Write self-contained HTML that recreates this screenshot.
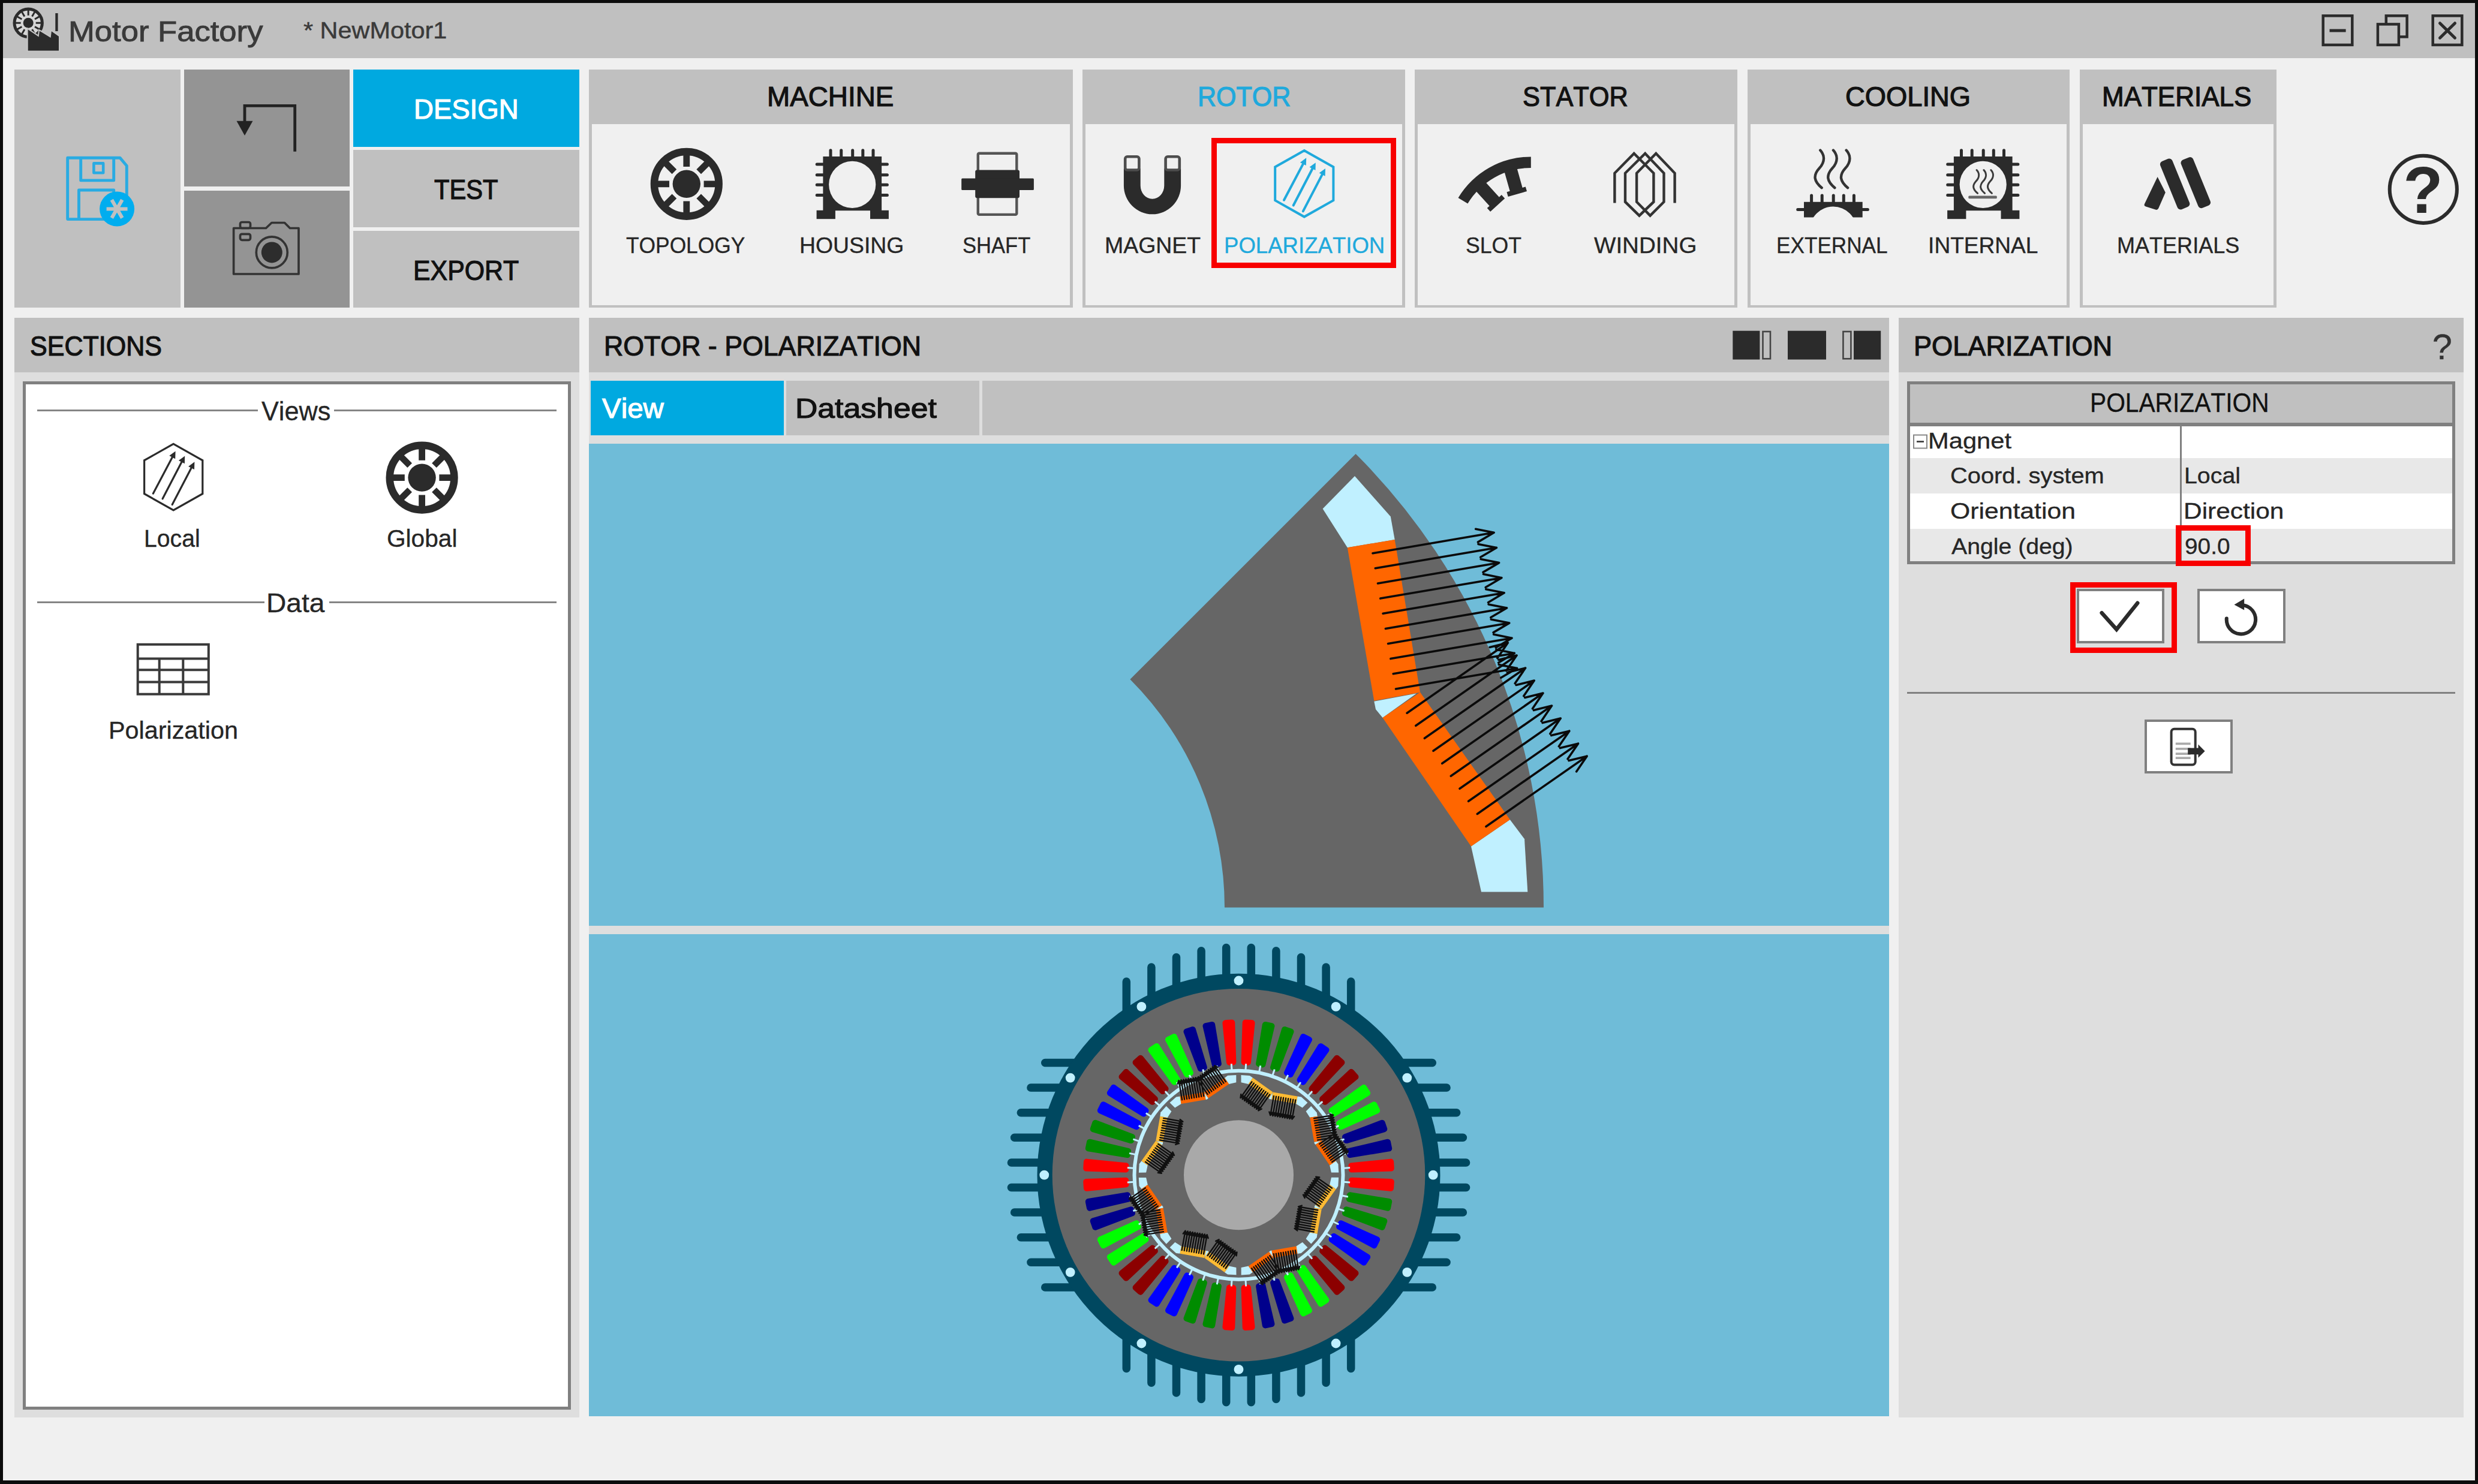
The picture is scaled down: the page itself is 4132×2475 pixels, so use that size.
<!DOCTYPE html>
<html lang="en"><head><meta charset="utf-8"><title>Motor Factory - NewMotor1</title>
<style>
html,body{margin:0;padding:0;background:#0c0c0c}
body{width:4132px;height:2475px;background:#0c0c0c;position:relative;overflow:hidden;font-family:"Liberation Sans",sans-serif}
header,nav,aside,main{display:block;position:static;margin:0;padding:0}
.b{position:absolute}
.t{position:absolute;white-space:nowrap;transform-origin:0 0;font-kerning:none;font-variant-ligatures:none}
svg{position:absolute;left:0;top:0;overflow:visible}
</style></head><body>
<div class="b win" style="left:5px;top:5px;width:4121.5px;height:2463.5px;background:#f0f0f0;"></div>
<header id="titlebar">
<div class="b titlebar" style="left:5px;top:5px;width:4121.5px;height:91.7px;background:#c0c0c0;"></div>
<svg class="icons icons-titlebar" width="4132" height="2475" viewBox="0 0 4132 2475">
<g class="appicon">
<circle cx="47.2" cy="38.3" r="23" fill="#d6d6d6"/>
<circle cx="47.2" cy="38.3" r="23.20" fill="none" stroke="#2b2b2b" stroke-width="5.00"/><circle cx="47.2" cy="38.3" r="8.50" fill="#2b2b2b"/><path d="M59.7 38.3L68.9 38.3M58.0 44.5L66.0 49.1M53.5 49.1L58.1 57.1M47.2 50.8L47.2 60.0M41.0 49.1L36.4 57.1M36.4 44.5L28.4 49.1M34.7 38.3L25.5 38.3M36.4 32.0L28.4 27.5M40.9 27.5L36.3 19.5M47.2 25.8L47.2 16.6M53.5 27.5L58.1 19.5M58.0 32.0L66.0 27.4" stroke="#2b2b2b" stroke-width="3.00" fill="none"/>
<polygon points="45.7,85.5 45.7,47.4 63.9,59.7 65.1,50 83.8,61.3 85.1,50.4 99,60.1 99,85.5" fill="#2b2b2b" stroke="#c6c6c6" stroke-width="2"/>
<rect x="92.3" y="22" width="4.3" height="30" fill="#2b2b2b"/>
</g>
<g class="winbtn" fill="none" stroke="#2b2b2b" stroke-width="4.5">
<rect x="3873.7" y="26.3" width="48.6" height="48.6"/>
<path d="M3884.5 51H3911.6" stroke-width="5"/>
<rect x="3978.8" y="26.3" width="34.8" height="35.1"/>
<rect x="3964.9" y="40.4" width="35" height="34.5" fill="#c0c0c0"/>
<rect x="4056.7" y="26.3" width="48.6" height="48.6"/>
<path d="M4068.5 38.7L4093.5 63.2M4093.5 38.7L4068.5 63.2" stroke-width="5" stroke-linecap="round"/>
</g>
</svg>
<div class="t" style="left:113.7px;top:23.9px;font-size:48.0px;line-height:58px;color:#3a3a3a;transform:scaleX(1.0958);-webkit-text-stroke:0.90px #3a3a3a;">Motor Factory</div>
<div class="t" style="left:506.1px;top:27.3px;font-size:39.2px;line-height:47px;color:#3a3a3a;transform:scaleX(1.0565);-webkit-text-stroke:0.50px #3a3a3a;">* NewMotor1</div>
</header>
<nav id="ribbon">
<div class="b save" style="left:24px;top:116px;width:277px;height:397px;background:#c0c0c0;"></div>
<div class="b undo" style="left:307px;top:116px;width:276px;height:195px;background:#949494;"></div>
<div class="b snap" style="left:307px;top:318px;width:276px;height:195px;background:#949494;"></div>
<div class="b mode on" style="left:589px;top:116px;width:377px;height:129px;background:#00a9e0;"></div>
<div class="b mode" style="left:589px;top:250px;width:377px;height:129px;background:#c0c0c0;"></div>
<div class="b mode" style="left:589px;top:385px;width:377px;height:128px;background:#c0c0c0;"></div>
<div class="b grp" style="left:982px;top:116px;width:807px;height:397px;background:#c0c0c0;"><div class="b" style="left:5px;top:90.5px;width:797px;height:302px;background:#f0f0f0"></div></div>
<div class="b grp" style="left:1805px;top:116px;width:538px;height:397px;background:#c0c0c0;"><div class="b" style="left:5px;top:90.5px;width:528px;height:302px;background:#f0f0f0"></div></div>
<div class="b grp" style="left:2359px;top:116px;width:538px;height:397px;background:#c0c0c0;"><div class="b" style="left:5px;top:90.5px;width:528px;height:302px;background:#f0f0f0"></div></div>
<div class="b grp" style="left:2914px;top:116px;width:537px;height:397px;background:#c0c0c0;"><div class="b" style="left:5px;top:90.5px;width:527px;height:302px;background:#f0f0f0"></div></div>
<div class="b grp" style="left:3468px;top:116px;width:328px;height:397px;background:#c0c0c0;"><div class="b" style="left:5px;top:90.5px;width:318px;height:302px;background:#f0f0f0"></div></div>
<div class="b hl" style="left:2020px;top:230px;width:308px;height:216.6px;background:transparent;box-sizing:border-box;border:9px solid #f80000;"></div>
<svg class="icons icons-ribbon" width="4132" height="2475" viewBox="0 0 4132 2475">
<g class="save" fill="none" stroke="#29abe2" stroke-width="4.9" stroke-linejoin="round">
<path d="M112.7 263.2H200L211.3 276.5V365.6H112.7Z"/>
<path d="M134.7 263.2V300.9H189.7V263.2"/>
<rect x="156.4" y="272.4" width="15.8" height="15.9" stroke-width="4.6"/>
<path d="M131.5 365.6V317H189.7V330"/>
<circle cx="195.1" cy="348.4" r="29" fill="#00adef" stroke="none"/>
<path d="M177.6 348.4L212.6 348.4M186.3 333.2L203.8 363.6M203.8 333.2L186.3 363.6" stroke="#c0c0c0" stroke-width="6" stroke-linecap="butt"/>
</g>
<path d="M408 204V176.3H491.7V252.7" fill="none" stroke="#222" stroke-width="4.8" stroke-linecap="butt"/>
<polygon points="394.5,201.7 421.5,201.7 408,226" fill="#222"/>
<g class="cam" fill="none" stroke="#333" stroke-width="3.7" stroke-linejoin="round">
<path d="M389.6 380.5H443.5L453 371.5H474.5L483.5 380.5H498V457H389.6Z"/>
<rect x="400.5" y="370.5" width="17" height="10" rx="3"/>
<rect x="400.5" y="390.3" width="17" height="10" rx="3"/>
<circle cx="453.3" cy="420.9" r="26"/>
<circle cx="453.3" cy="420.9" r="17.5" fill="#2d2d2d" stroke="none"/>
</g>
<circle cx="1144.8" cy="306.8" r="53.85" fill="none" stroke="#2b2b2b" stroke-width="12.50"/><circle cx="1144.8" cy="306.8" r="23.20" fill="#2b2b2b"/><path d="M1173.6 306.8L1193.4 306.8M1165.2 327.2L1179.2 341.2M1144.8 335.6L1144.8 355.4M1124.4 327.2L1110.4 341.2M1116.0 306.8L1096.2 306.8M1124.4 286.4L1110.4 272.4M1144.8 278.0L1144.8 258.2M1165.2 286.4L1179.2 272.4" stroke="#2b2b2b" stroke-width="10.80" fill="none"/>
<path d="M1372.4 260.9H1470.1V351.3H1372.4ZM1382.1 307.8a39.1 39.1 0 1 0 78.2 0a39.1 39.1 0 1 0 -78.2 0Z" fill="#2b2b2b" fill-rule="evenodd"/><rect x="1361.6" y="350.8" width="31.3" height="14.4" fill="#2b2b2b"/><rect x="1451.0" y="350.8" width="30.9" height="14.4" fill="#2b2b2b"/><path d="M1385.0 250.7V262.0M1402.7 250.7V262.0M1421.7 250.7V262.0M1438.8 250.7V262.0M1456.0 250.7V262.0M1362.2 274.1H1373.5M1469.0 274.1H1479.4M1362.2 291.7H1373.5M1469.0 291.7H1479.4M1362.2 308.3H1373.5M1469.0 308.3H1479.4M1362.2 325.4H1373.5M1469.0 325.4H1479.4" stroke="#2b2b2b" stroke-width="5" stroke-linecap="round" fill="none"/>
<rect x="1630.8" y="255.8" width="64.5" height="102.1" rx="2" fill="none" stroke="#555" stroke-width="4.4"/>
<rect x="1626.2" y="283.4" width="73.8" height="46.9" rx="3" fill="#2b2b2b"/>
<rect x="1603.2" y="297.6" width="120.7" height="19.5" rx="1.5" fill="#2b2b2b"/>
<path d="M1873.9 281V309.5A47.6 47.8 0 0 0 1969.1 309.5V281H1941.3V309.5A19.8 22.3 0 0 1 1901.7 309.5V281Z" fill="#2b2b2b"/>
<rect x="1876.2" y="261.3" width="23.2" height="22.2" rx="3.5" fill="#f0f0f0" stroke="#4d4d4d" stroke-width="4.6"/>
<rect x="1943.6" y="261.3" width="23.2" height="22.2" rx="3.5" fill="#f0f0f0" stroke="#4d4d4d" stroke-width="4.6"/>
<polygon points="2174.8,251.1 2223.4,278.5 2223.4,334.2 2174.8,361.6 2126.2,334.2 2126.2,278.5" fill="none" stroke="#1fa9dc" stroke-width="4.0" stroke-linejoin="miter"/><path d="M2141.0 333.7L2175.4 268.6" stroke="#1fa9dc" stroke-width="4.0" stroke-linecap="round" fill="none"/><polygon points="2178.2,263.3 2177.8,276.1 2167.9,270.9" fill="#1fa9dc"/><path d="M2156.7 342.5L2191.0 276.5" stroke="#1fa9dc" stroke-width="4.0" stroke-linecap="round" fill="none"/><polygon points="2193.8,271.2 2193.5,284.0 2183.5,278.8" fill="#1fa9dc"/><path d="M2172.8 352.3L2207.2 286.3" stroke="#1fa9dc" stroke-width="4.0" stroke-linecap="round" fill="none"/><polygon points="2210.0,281.0 2209.6,293.8 2199.7,288.6" fill="#1fa9dc"/>
<path d="M2552.8 261.4A141.5 141.5 0 0 0 2431.5 330.0L2447.4 339.6A123.0 123.0 0 0 1 2552.8 279.9Z" fill="#2b2b2b"/><polygon points="2508.3,285.6 2517.7,318.8 2512.5,320.3 2514.7,328.0 2546.0,319.1 2543.8,311.4 2538.6,312.9 2529.3,279.7" fill="#2b2b2b"/><polygon points="2460.5,317.9 2483.7,343.4 2479.7,347.1 2485.1,353.0 2509.2,331.0 2503.8,325.1 2499.8,328.7 2476.6,303.2" fill="#2b2b2b"/>
<path d="M2692.4 338.6V288.8L2724.7 256L2757.4 288.8V336.7L2733.5 359.6L2710.0 336.7V288.8L2743.2 256L2774.5 288.8V336.7L2751.6 359.6L2729.1 336.7V288.8L2761.3 256L2792.6 288.8V338.6" fill="none" stroke="#333" stroke-width="4.4" stroke-linejoin="miter" stroke-linecap="butt"/>
<clipPath id="extclip"><rect x="2990" y="318" width="135" height="44.6"/></clipPath>
<g clip-path="url(#extclip)">
<path d="M3008.0 336.7H3105.7V380H3008.0ZM3017.7 383.6a39.1 39.1 0 1 0 78.2 0a39.1 39.1 0 1 0 -78.2 0Z" fill="#2b2b2b" fill-rule="evenodd"/>
</g>
<path d="M3020.6 326V338M3038.2 326V338M3057.2 326V338M3074.3 326V338M3091.4 326V338M2997.7 349.4H3009M3105 349.4H3114.4" stroke="#2b2b2b" stroke-width="5" stroke-linecap="round" fill="none"/>
<path d="M3035.2 250.6c7.5 8.0 8.5 19.0 -1.5 30.0c-11.0 12.0 -9.0 22.0 4.0 32.6" stroke="#333" stroke-width="4.4" stroke-linecap="round" fill="none"/>
<path d="M3056.9 250.6c7.5 8.0 8.5 19.0 -1.5 30.0c-11.0 12.0 -9.0 22.0 4.0 32.6" stroke="#333" stroke-width="4.4" stroke-linecap="round" fill="none"/>
<path d="M3078.6 250.6c7.5 8.0 8.5 19.0 -1.5 30.0c-11.0 12.0 -9.0 22.0 4.0 32.6" stroke="#333" stroke-width="4.4" stroke-linecap="round" fill="none"/>
<path d="M3257.9 260.9H3355.6V351.3H3257.9ZM3267.6 307.8a39.1 39.1 0 1 0 78.2 0a39.1 39.1 0 1 0 -78.2 0Z" fill="#2b2b2b" fill-rule="evenodd"/><rect x="3247.1" y="350.8" width="31.3" height="14.4" fill="#2b2b2b"/><rect x="3336.5" y="350.8" width="30.9" height="14.4" fill="#2b2b2b"/><path d="M3270.5 250.7V262.0M3288.2 250.7V262.0M3307.2 250.7V262.0M3324.3 250.7V262.0M3341.5 250.7V262.0M3247.7 274.1H3259.0M3354.5 274.1H3364.9M3247.7 291.7H3259.0M3354.5 291.7H3364.9M3247.7 308.3H3259.0M3354.5 308.3H3364.9M3247.7 325.4H3259.0M3354.5 325.4H3364.9" stroke="#2b2b2b" stroke-width="5" stroke-linecap="round" fill="none"/>
<rect x="3282.3" y="326.4" width="47.5" height="4.9" rx="1.5" fill="#666"/>
<path d="M3296.0 283.5c4.7 5.0 5.3 11.8 -0.9 18.6c-6.8 7.4 -5.6 13.6 2.5 20.2" stroke="#3a3a3a" stroke-width="3.0" stroke-linecap="round" fill="none"/>
<path d="M3307.9 283.5c4.7 5.0 5.3 11.8 -0.9 18.6c-6.8 7.4 -5.6 13.6 2.5 20.2" stroke="#3a3a3a" stroke-width="3.0" stroke-linecap="round" fill="none"/>
<path d="M3319.8 283.5c4.7 5.0 5.3 11.8 -0.9 18.6c-6.8 7.4 -5.6 13.6 2.5 20.2" stroke="#3a3a3a" stroke-width="3.0" stroke-linecap="round" fill="none"/>
<rect x="-10.9" y="-43.3" width="21.8" height="86.6" rx="5.5" fill="#2b2b2b" transform="translate(3626.6 307) rotate(-22.2)"/>
<rect x="-10.9" y="-43.3" width="21.8" height="86.6" rx="5.5" fill="#2b2b2b" transform="translate(3661.3 304.6) rotate(-22.2)"/>
<path d="M3597.6 295.1L3610.8 321L3599.2 347.5Q3597.6 350.9 3594 349.6L3578.2 344.6Q3574.4 343.4 3576 340Z" fill="#2b2b2b"/>
<circle cx="4040.8" cy="315.8" r="56.1" fill="none" stroke="#2b2b2b" stroke-width="6"/>
<text x="4040.3" y="354.6" font-family="Liberation Sans, sans-serif" font-weight="bold" font-size="108.5" text-anchor="middle" fill="#2b2b2b">?</text>
</svg>
<div class="t" style="left:690.2px;top:154.0px;font-size:46.5px;line-height:56px;color:#fff;transform:scaleX(0.9792);-webkit-text-stroke:1.20px #fff;">DESIGN</div>
<div class="t" style="left:724.0px;top:288.2px;font-size:46.5px;line-height:56px;color:#111;transform:scaleX(0.8963);-webkit-text-stroke:1.20px #111;">TEST</div>
<div class="t" style="left:689.0px;top:423.0px;font-size:46.5px;line-height:56px;color:#111;transform:scaleX(0.9215);-webkit-text-stroke:1.20px #111;">EXPORT</div>
<div class="t" style="left:1278.8px;top:132.6px;font-size:46.5px;line-height:56px;color:#111;transform:scaleX(0.9856);-webkit-text-stroke:1.20px #111;">MACHINE</div>
<div class="t" style="left:1997.0px;top:132.6px;font-size:46.5px;line-height:56px;color:#1fa9dc;transform:scaleX(0.9256);-webkit-text-stroke:1.20px #1fa9dc;">ROTOR</div>
<div class="t" style="left:2538.6px;top:132.6px;font-size:46.5px;line-height:56px;color:#111;transform:scaleX(0.9325);-webkit-text-stroke:1.20px #111;">STATOR</div>
<div class="t" style="left:3076.6px;top:132.6px;font-size:46.5px;line-height:56px;color:#111;transform:scaleX(0.9747);-webkit-text-stroke:1.20px #111;">COOLING</div>
<div class="t" style="left:3505.4px;top:132.6px;font-size:46.5px;line-height:56px;color:#111;transform:scaleX(0.9462);-webkit-text-stroke:1.20px #111;">MATERIALS</div>
<div class="t" style="left:1044.2px;top:387.0px;font-size:37.1px;line-height:45px;color:#262626;transform:scaleX(0.9530);-webkit-text-stroke:0.35px #262626;">TOPOLOGY</div>
<div class="t" style="left:1333.1px;top:387.0px;font-size:37.1px;line-height:45px;color:#262626;transform:scaleX(1.0079);-webkit-text-stroke:0.35px #262626;">HOUSING</div>
<div class="t" style="left:1605.3px;top:387.0px;font-size:37.1px;line-height:45px;color:#262626;transform:scaleX(0.9320);-webkit-text-stroke:0.35px #262626;">SHAFT</div>
<div class="t" style="left:1841.5px;top:387.0px;font-size:37.1px;line-height:45px;color:#262626;transform:scaleX(1.0093);-webkit-text-stroke:0.35px #262626;">MAGNET</div>
<div class="t" style="left:2041.0px;top:387.0px;font-size:37.1px;line-height:45px;color:#1fa9dc;transform:scaleX(0.9865);-webkit-text-stroke:0.35px #1fa9dc;">POLARIZATION</div>
<div class="t" style="left:2444.0px;top:387.0px;font-size:37.1px;line-height:45px;color:#262626;transform:scaleX(0.9608);-webkit-text-stroke:0.35px #262626;">SLOT</div>
<div class="t" style="left:2657.7px;top:387.0px;font-size:37.1px;line-height:45px;color:#262626;transform:scaleX(1.0402);-webkit-text-stroke:0.35px #262626;">WINDING</div>
<div class="t" style="left:2962.3px;top:387.0px;font-size:37.1px;line-height:45px;color:#262626;transform:scaleX(0.9482);-webkit-text-stroke:0.35px #262626;">EXTERNAL</div>
<div class="t" style="left:3215.1px;top:387.0px;font-size:37.1px;line-height:45px;color:#262626;-webkit-text-stroke:0.35px #262626;">INTERNAL</div>
<div class="t" style="left:3530.4px;top:387.0px;font-size:37.1px;line-height:45px;color:#262626;transform:scaleX(0.9719);-webkit-text-stroke:0.35px #262626;">MATERIALS</div>
</nav>
<aside id="sections">
<div class="b phdr" style="left:24px;top:530px;width:942px;height:91px;background:#c0c0c0;"></div>
<div class="b pbody" style="left:24px;top:621px;width:942px;height:1743px;background:#dedede;"></div>
<div class="b list" style="left:38px;top:635.5px;width:914px;height:1715.5px;background:#fff;box-sizing:border-box;border:5px solid #808080;"></div>
<div class="b ln" style="left:62px;top:683.1px;width:367.5px;height:3px;background:#858585;"></div>
<div class="b ln" style="left:557px;top:683.1px;width:371px;height:3px;background:#858585;"></div>
<div class="b ln" style="left:62px;top:1002.8px;width:379px;height:3px;background:#858585;"></div>
<div class="b ln" style="left:549px;top:1002.8px;width:379px;height:3px;background:#858585;"></div>
<svg class="icons icons-sections" width="4132" height="2475" viewBox="0 0 4132 2475">
<polygon points="289.2,740.4 337.8,767.8 337.8,823.5 289.2,850.9 240.6,823.5 240.6,767.8" fill="none" stroke="#2b2b2b" stroke-width="3.2" stroke-linejoin="miter"/><path d="M255.4 823.0L289.8 757.9" stroke="#2b2b2b" stroke-width="3.2" stroke-linecap="round" fill="none"/><polygon points="292.6,752.6 292.2,765.3 282.3,760.1" fill="#2b2b2b"/><path d="M271.1 831.8L305.4 765.8" stroke="#2b2b2b" stroke-width="3.2" stroke-linecap="round" fill="none"/><polygon points="308.2,760.5 307.9,773.2 297.9,768.1" fill="#2b2b2b"/><path d="M287.2 841.6L321.6 775.6" stroke="#2b2b2b" stroke-width="3.2" stroke-linecap="round" fill="none"/><polygon points="324.4,770.2 324.0,783.0 314.1,777.9" fill="#2b2b2b"/>
<circle cx="703.6" cy="796.6" r="53.85" fill="none" stroke="#2b2b2b" stroke-width="12.50"/><circle cx="703.6" cy="796.6" r="23.20" fill="#2b2b2b"/><path d="M732.4 796.6L752.2 796.6M724.0 817.0L738.0 831.0M703.6 825.4L703.6 845.2M683.2 817.0L669.2 831.0M674.8 796.6L655.0 796.6M683.2 776.2L669.2 762.2M703.6 767.8L703.6 748.0M724.0 776.2L738.0 762.2" stroke="#2b2b2b" stroke-width="10.80" fill="none"/>
<g fill="none" stroke="#3a3a3a" stroke-width="4">
<rect x="229.7" y="1074.8" width="118.1" height="82.9"/>
<path d="M229.7 1098.5H347.8M229.7 1117.3H347.8M229.7 1137.5H347.8M265.7 1098.5V1157.7M305.3 1098.5V1157.7"/>
</g>
</svg>
<div class="t" style="left:50.4px;top:549.2px;font-size:46.5px;line-height:56px;color:#111;transform:scaleX(0.9256);-webkit-text-stroke:1.20px #111;">SECTIONS</div>
<div class="t" style="left:436.0px;top:659.0px;font-size:45.1px;line-height:54px;color:#262626;transform:scaleX(0.9594);-webkit-text-stroke:0.35px #262626;">Views</div>
<div class="t" style="left:444.4px;top:978.8px;font-size:45.1px;line-height:54px;color:#262626;transform:scaleX(1.0227);-webkit-text-stroke:0.35px #262626;">Data</div>
<div class="t" style="left:240.4px;top:874.0px;font-size:40.0px;line-height:48px;color:#262626;transform:scaleX(0.9798);-webkit-text-stroke:0.35px #262626;">Local</div>
<div class="t" style="left:645.1px;top:874.0px;font-size:40.0px;line-height:48px;color:#262626;transform:scaleX(1.0154);-webkit-text-stroke:0.35px #262626;">Global</div>
<div class="t" style="left:180.8px;top:1194.3px;font-size:40.0px;line-height:48px;color:#262626;transform:scaleX(1.0335);-webkit-text-stroke:0.35px #262626;">Polarization</div>
</aside>
<main id="workspace">
<div class="b phdr" style="left:982px;top:530px;width:2168px;height:91px;background:#c0c0c0;"></div>
<div class="b pbody" style="left:982px;top:621px;width:2168px;height:119px;background:#dedede;"></div>
<div class="b tab on" style="left:985px;top:635px;width:322px;height:91px;background:#00a9e0;"></div>
<div class="b tab" style="left:1311px;top:635px;width:322px;height:91px;background:#c0c0c0;"></div>
<div class="b tabfill" style="left:1638px;top:635px;width:1512px;height:91px;background:#c0c0c0;"></div>
<div class="b vp" style="left:982px;top:740px;width:2168px;height:804px;background:#6fbcd8;"></div>
<div class="b split" style="left:982px;top:1544px;width:2168px;height:14px;background:#dedede;"></div>
<div class="b vp" style="left:982px;top:1558px;width:2168px;height:804px;background:#6fbcd8;"></div>
<svg class="vp-local" width="4132" height="2475" viewBox="0 0 4132 2475">
<path d="M2042.0 1513.5L2574.0 1513.5A1070 1070 0 0 0 2260.6 756.9L1884.4 1133.1A538 538 0 0 1 2042.0 1513.5Z" fill="#666"/>
<polygon points="2259.0,794.0 2318.8,861.5 2325.7,900.0 2246.8,913.3 2205.6,848.6" fill="#c0f0ff"/>
<polygon points="2291.3,1169.8 2362.0,1156.6 2305.5,1197.0 2294.0,1183.0" fill="#c0f0ff"/>
<polygon points="2453.0,1411.4 2517.8,1366.9 2542.0,1399.2 2547.3,1487.4 2470.0,1487.4" fill="#c0f0ff"/>
<polygon points="2246.8,913.3 2325.7,900.0 2368.0,1154.7 2291.3,1168.8" fill="#ff6600"/>
<polygon points="2305.5,1197.0 2368.0,1154.6 2517.8,1366.9 2453.0,1411.4" fill="#ff6600"/>
<path d="M2289.0 922.7L2491.1 888.3M2464.4 904.1L2491.1 888.3M2460.7 882.2L2491.1 888.3M2293.3 947.8L2495.4 913.5M2468.7 929.3L2495.4 913.5M2465.0 907.4L2495.4 913.5M2297.5 973.0L2499.6 938.6M2473.0 954.4L2499.6 938.6M2469.2 932.5L2499.6 938.6M2301.8 998.1L2503.9 963.7M2477.2 979.5L2503.9 963.7M2473.5 957.6L2503.9 963.7M2306.1 1023.2L2508.2 988.8M2481.5 1004.7L2508.2 988.8M2477.8 982.8L2508.2 988.8M2310.4 1048.4L2512.5 1014.0M2485.8 1029.8L2512.5 1014.0M2482.1 1007.9L2512.5 1014.0M2314.6 1073.5L2516.7 1039.1M2490.1 1054.9L2516.7 1039.1M2486.3 1033.0L2516.7 1039.1M2318.9 1098.6L2521.0 1064.2M2494.3 1080.0L2521.0 1064.2M2490.6 1058.1L2521.0 1064.2M2323.2 1123.7L2525.3 1089.4M2498.6 1105.2L2525.3 1089.4M2494.9 1083.3L2525.3 1089.4M2327.5 1148.9L2529.6 1114.5M2502.9 1130.3L2529.6 1114.5M2499.2 1108.4L2529.6 1114.5M2346.1 1189.2L2514.3 1072.0M2496.9 1097.7L2514.3 1072.0M2484.2 1079.5L2514.3 1072.0M2360.8 1210.3L2529.0 1093.1M2511.6 1118.7L2529.0 1093.1M2498.9 1100.5L2529.0 1093.1M2375.4 1231.3L2543.6 1114.1M2526.2 1139.7L2543.6 1114.1M2513.5 1121.5L2543.6 1114.1M2390.0 1252.3L2558.2 1135.1M2540.8 1160.8L2558.2 1135.1M2528.1 1142.5L2558.2 1135.1M2404.7 1273.3L2572.9 1156.1M2555.5 1181.8L2572.9 1156.1M2542.8 1163.5L2572.9 1156.1M2419.3 1294.3L2587.5 1177.1M2570.1 1202.8L2587.5 1177.1M2557.4 1184.6L2587.5 1177.1M2434.0 1315.3L2602.2 1198.1M2584.8 1223.8L2602.2 1198.1M2572.1 1205.6L2602.2 1198.1M2448.6 1336.3L2616.8 1219.2M2599.4 1244.8L2616.8 1219.2M2586.7 1226.6L2616.8 1219.2M2463.3 1357.4L2631.5 1240.2M2614.1 1265.8L2631.5 1240.2M2601.4 1247.6L2631.5 1240.2M2477.9 1378.4L2646.1 1261.2M2628.7 1286.8L2646.1 1261.2M2616.0 1268.6L2646.1 1261.2" fill="none" stroke="#0a0a0a" stroke-width="3.6" stroke-linecap="round" stroke-linejoin="miter"/>
</svg>
<svg class="vp-global" width="4132" height="2475" viewBox="0 0 4132 2475">
<path d="M2044.7 1632.4L2044.7 1580.6M2003.1 1637.7L2003.1 1585.8M1961.5 1648.6L1961.5 1596.5M1919.9 1665.8L1919.9 1613.1M1878.3 1690.4L1878.3 1636.9M2086.3 1632.4L2086.3 1580.6M2127.9 1637.7L2127.9 1585.8M2169.5 1648.6L2169.5 1596.5M2211.1 1665.8L2211.1 1613.1M2252.7 1690.4L2252.7 1636.9M2044.7 2287.0L2044.7 2338.8M2003.1 2281.7L2003.1 2333.6M1961.5 2270.8L1961.5 2322.9M1919.9 2253.6L1919.9 2306.3M1878.3 2229.0L1878.3 2282.5M2086.3 2287.0L2086.3 2338.8M2127.9 2281.7L2127.9 2333.6M2169.5 2270.8L2169.5 2322.9M2211.1 2253.6L2211.1 2306.3M2252.7 2229.0L2252.7 2282.5M1738.2 1938.9L1686.4 1938.9M1743.5 1897.3L1691.6 1897.3M1754.4 1855.7L1702.3 1855.7M1771.6 1814.1L1718.9 1814.1M1796.2 1772.5L1742.7 1772.5M1738.2 1980.5L1686.4 1980.5M1743.5 2022.1L1691.6 2022.1M1754.4 2063.7L1702.3 2063.7M1771.6 2105.3L1718.9 2105.3M1796.2 2146.9L1742.7 2146.9M2392.8 1938.9L2444.6 1938.9M2387.5 1897.3L2439.4 1897.3M2376.6 1855.7L2428.7 1855.7M2359.4 1814.1L2412.1 1814.1M2334.8 1772.5L2388.3 1772.5M2392.8 1980.5L2444.6 1980.5M2387.5 2022.1L2439.4 2022.1M2376.6 2063.7L2428.7 2063.7M2359.4 2105.3L2412.1 2105.3M2334.8 2146.9L2388.3 2146.9" stroke="#004860" stroke-width="13.5" stroke-linecap="round" fill="none"/>
<circle cx="2065.5" cy="1959.7" r="336" fill="#004860"/>
<circle cx="2065.5" cy="1635.5" r="7.9" fill="#c0f0ff"/>
<circle cx="2227.6" cy="1678.9" r="7.9" fill="#c0f0ff"/>
<circle cx="2346.3" cy="1797.6" r="7.9" fill="#c0f0ff"/>
<circle cx="2389.7" cy="1959.7" r="7.9" fill="#c0f0ff"/>
<circle cx="2346.3" cy="2121.8" r="7.9" fill="#c0f0ff"/>
<circle cx="2227.6" cy="2240.5" r="7.9" fill="#c0f0ff"/>
<circle cx="2065.5" cy="2283.9" r="7.9" fill="#c0f0ff"/>
<circle cx="1903.4" cy="2240.5" r="7.9" fill="#c0f0ff"/>
<circle cx="1784.7" cy="2121.8" r="7.9" fill="#c0f0ff"/>
<circle cx="1741.3" cy="1959.7" r="7.9" fill="#c0f0ff"/>
<circle cx="1784.7" cy="1797.6" r="7.9" fill="#c0f0ff"/>
<circle cx="1903.4" cy="1678.9" r="7.9" fill="#c0f0ff"/>
<circle cx="2065.5" cy="1959.7" r="310.8" fill="#666"/>
<polygon points="2050.0,1771.8 2043.4,1706.1 2054.3,1705.4 2056.4,1771.4" fill="#ff0000" stroke="#ff0000" stroke-width="10" stroke-linejoin="round"/>
<path d="M2054.0 1784.1L2053.3 1774.1" stroke="#c0f0ff" stroke-width="3"/>
<polygon points="2074.6,1771.4 2076.7,1705.4 2087.6,1706.1 2081.0,1771.8" fill="#ff0000" stroke="#ff0000" stroke-width="10" stroke-linejoin="round"/>
<path d="M2077.0 1784.1L2077.7 1774.1" stroke="#c0f0ff" stroke-width="3"/>
<polygon points="2099.1,1774.2 2109.8,1709.0 2120.5,1711.2 2105.4,1775.4" fill="#008c00" stroke="#008c00" stroke-width="10" stroke-linejoin="round"/>
<path d="M2099.8 1787.1L2101.8 1777.3" stroke="#c0f0ff" stroke-width="3"/>
<polygon points="2123.1,1780.2 2142.1,1716.9 2152.5,1720.5 2129.1,1782.2" fill="#008c00" stroke="#008c00" stroke-width="10" stroke-linejoin="round"/>
<path d="M2122.1 1793.0L2125.3 1783.6" stroke="#c0f0ff" stroke-width="3"/>
<polygon points="2146.0,1789.2 2173.1,1729.0 2183.0,1733.9 2151.7,1792.1" fill="#0000ff" stroke="#0000ff" stroke-width="10" stroke-linejoin="round"/>
<path d="M2143.3 1801.9L2147.8 1792.9" stroke="#c0f0ff" stroke-width="3"/>
<polygon points="2167.6,1801.2 2202.3,1745.0 2211.5,1751.1 2172.9,1804.7" fill="#0000ff" stroke="#0000ff" stroke-width="10" stroke-linejoin="round"/>
<path d="M2163.3 1813.4L2168.8 1805.0" stroke="#c0f0ff" stroke-width="3"/>
<polygon points="2187.4,1815.9 2229.2,1764.7 2237.4,1772.0 2192.2,1820.1" fill="#8c0000" stroke="#8c0000" stroke-width="10" stroke-linejoin="round"/>
<path d="M2181.5 1827.4L2188.1 1819.9" stroke="#c0f0ff" stroke-width="3"/>
<polygon points="2205.1,1833.0 2253.2,1787.8 2260.5,1796.0 2209.3,1837.8" fill="#8c0000" stroke="#8c0000" stroke-width="10" stroke-linejoin="round"/>
<path d="M2197.8 1843.7L2205.3 1837.1" stroke="#c0f0ff" stroke-width="3"/>
<polygon points="2220.5,1852.3 2274.1,1813.7 2280.2,1822.9 2224.0,1857.6" fill="#00ff00" stroke="#00ff00" stroke-width="10" stroke-linejoin="round"/>
<path d="M2211.8 1861.9L2220.2 1856.4" stroke="#c0f0ff" stroke-width="3"/>
<polygon points="2233.1,1873.5 2291.3,1842.2 2296.2,1852.1 2236.0,1879.2" fill="#00ff00" stroke="#00ff00" stroke-width="10" stroke-linejoin="round"/>
<path d="M2223.3 1881.9L2232.3 1877.4" stroke="#c0f0ff" stroke-width="3"/>
<polygon points="2243.0,1896.1 2304.7,1872.7 2308.3,1883.1 2245.0,1902.1" fill="#00008c" stroke="#00008c" stroke-width="10" stroke-linejoin="round"/>
<path d="M2232.2 1903.1L2241.6 1899.9" stroke="#c0f0ff" stroke-width="3"/>
<polygon points="2249.8,1919.8 2314.0,1904.7 2316.2,1915.4 2251.0,1926.1" fill="#00008c" stroke="#00008c" stroke-width="10" stroke-linejoin="round"/>
<path d="M2238.1 1925.4L2247.9 1923.4" stroke="#c0f0ff" stroke-width="3"/>
<polygon points="2253.4,1944.2 2319.1,1937.6 2319.8,1948.5 2253.8,1950.6" fill="#ff0000" stroke="#ff0000" stroke-width="10" stroke-linejoin="round"/>
<path d="M2241.1 1948.2L2251.1 1947.5" stroke="#c0f0ff" stroke-width="3"/>
<polygon points="2253.8,1968.8 2319.8,1970.9 2319.1,1981.8 2253.4,1975.2" fill="#ff0000" stroke="#ff0000" stroke-width="10" stroke-linejoin="round"/>
<path d="M2241.1 1971.2L2251.1 1971.9" stroke="#c0f0ff" stroke-width="3"/>
<polygon points="2251.0,1993.3 2316.2,2004.0 2314.0,2014.7 2249.8,1999.6" fill="#008c00" stroke="#008c00" stroke-width="10" stroke-linejoin="round"/>
<path d="M2238.1 1994.0L2247.9 1996.0" stroke="#c0f0ff" stroke-width="3"/>
<polygon points="2245.0,2017.3 2308.3,2036.3 2304.7,2046.7 2243.0,2023.3" fill="#008c00" stroke="#008c00" stroke-width="10" stroke-linejoin="round"/>
<path d="M2232.2 2016.3L2241.6 2019.5" stroke="#c0f0ff" stroke-width="3"/>
<polygon points="2236.0,2040.2 2296.2,2067.3 2291.3,2077.2 2233.1,2045.9" fill="#0000ff" stroke="#0000ff" stroke-width="10" stroke-linejoin="round"/>
<path d="M2223.3 2037.5L2232.3 2042.0" stroke="#c0f0ff" stroke-width="3"/>
<polygon points="2224.0,2061.8 2280.2,2096.5 2274.1,2105.7 2220.5,2067.1" fill="#0000ff" stroke="#0000ff" stroke-width="10" stroke-linejoin="round"/>
<path d="M2211.8 2057.5L2220.2 2063.0" stroke="#c0f0ff" stroke-width="3"/>
<polygon points="2209.3,2081.6 2260.5,2123.4 2253.2,2131.6 2205.1,2086.4" fill="#8c0000" stroke="#8c0000" stroke-width="10" stroke-linejoin="round"/>
<path d="M2197.8 2075.7L2205.3 2082.3" stroke="#c0f0ff" stroke-width="3"/>
<polygon points="2192.2,2099.3 2237.4,2147.4 2229.2,2154.7 2187.4,2103.5" fill="#8c0000" stroke="#8c0000" stroke-width="10" stroke-linejoin="round"/>
<path d="M2181.5 2092.0L2188.1 2099.5" stroke="#c0f0ff" stroke-width="3"/>
<polygon points="2172.9,2114.7 2211.5,2168.3 2202.3,2174.4 2167.6,2118.2" fill="#00ff00" stroke="#00ff00" stroke-width="10" stroke-linejoin="round"/>
<path d="M2163.3 2106.0L2168.8 2114.4" stroke="#c0f0ff" stroke-width="3"/>
<polygon points="2151.7,2127.3 2183.0,2185.5 2173.1,2190.4 2146.0,2130.2" fill="#00ff00" stroke="#00ff00" stroke-width="10" stroke-linejoin="round"/>
<path d="M2143.3 2117.5L2147.8 2126.5" stroke="#c0f0ff" stroke-width="3"/>
<polygon points="2129.1,2137.2 2152.5,2198.9 2142.1,2202.5 2123.1,2139.2" fill="#00008c" stroke="#00008c" stroke-width="10" stroke-linejoin="round"/>
<path d="M2122.1 2126.4L2125.3 2135.8" stroke="#c0f0ff" stroke-width="3"/>
<polygon points="2105.4,2144.0 2120.5,2208.2 2109.8,2210.4 2099.1,2145.2" fill="#00008c" stroke="#00008c" stroke-width="10" stroke-linejoin="round"/>
<path d="M2099.8 2132.3L2101.8 2142.1" stroke="#c0f0ff" stroke-width="3"/>
<polygon points="2081.0,2147.6 2087.6,2213.3 2076.7,2214.0 2074.6,2148.0" fill="#ff0000" stroke="#ff0000" stroke-width="10" stroke-linejoin="round"/>
<path d="M2077.0 2135.3L2077.7 2145.3" stroke="#c0f0ff" stroke-width="3"/>
<polygon points="2056.4,2148.0 2054.3,2214.0 2043.4,2213.3 2050.0,2147.6" fill="#ff0000" stroke="#ff0000" stroke-width="10" stroke-linejoin="round"/>
<path d="M2054.0 2135.3L2053.3 2145.3" stroke="#c0f0ff" stroke-width="3"/>
<polygon points="2031.9,2145.2 2021.2,2210.4 2010.5,2208.2 2025.6,2144.0" fill="#008c00" stroke="#008c00" stroke-width="10" stroke-linejoin="round"/>
<path d="M2031.2 2132.3L2029.2 2142.1" stroke="#c0f0ff" stroke-width="3"/>
<polygon points="2007.9,2139.2 1988.9,2202.5 1978.5,2198.9 2001.9,2137.2" fill="#008c00" stroke="#008c00" stroke-width="10" stroke-linejoin="round"/>
<path d="M2008.9 2126.4L2005.7 2135.8" stroke="#c0f0ff" stroke-width="3"/>
<polygon points="1985.0,2130.2 1957.9,2190.4 1948.0,2185.5 1979.3,2127.3" fill="#0000ff" stroke="#0000ff" stroke-width="10" stroke-linejoin="round"/>
<path d="M1987.7 2117.5L1983.2 2126.5" stroke="#c0f0ff" stroke-width="3"/>
<polygon points="1963.4,2118.2 1928.7,2174.4 1919.5,2168.3 1958.1,2114.7" fill="#0000ff" stroke="#0000ff" stroke-width="10" stroke-linejoin="round"/>
<path d="M1967.7 2106.0L1962.2 2114.4" stroke="#c0f0ff" stroke-width="3"/>
<polygon points="1943.6,2103.5 1901.8,2154.7 1893.6,2147.4 1938.8,2099.3" fill="#8c0000" stroke="#8c0000" stroke-width="10" stroke-linejoin="round"/>
<path d="M1949.5 2092.0L1942.9 2099.5" stroke="#c0f0ff" stroke-width="3"/>
<polygon points="1925.9,2086.4 1877.8,2131.6 1870.5,2123.4 1921.7,2081.6" fill="#8c0000" stroke="#8c0000" stroke-width="10" stroke-linejoin="round"/>
<path d="M1933.2 2075.7L1925.7 2082.3" stroke="#c0f0ff" stroke-width="3"/>
<polygon points="1910.5,2067.1 1856.9,2105.7 1850.8,2096.5 1907.0,2061.8" fill="#00ff00" stroke="#00ff00" stroke-width="10" stroke-linejoin="round"/>
<path d="M1919.2 2057.5L1910.8 2063.0" stroke="#c0f0ff" stroke-width="3"/>
<polygon points="1897.9,2045.9 1839.7,2077.2 1834.8,2067.3 1895.0,2040.2" fill="#00ff00" stroke="#00ff00" stroke-width="10" stroke-linejoin="round"/>
<path d="M1907.7 2037.5L1898.7 2042.0" stroke="#c0f0ff" stroke-width="3"/>
<polygon points="1888.0,2023.3 1826.3,2046.7 1822.7,2036.3 1886.0,2017.3" fill="#00008c" stroke="#00008c" stroke-width="10" stroke-linejoin="round"/>
<path d="M1898.8 2016.3L1889.4 2019.5" stroke="#c0f0ff" stroke-width="3"/>
<polygon points="1881.2,1999.6 1817.0,2014.7 1814.8,2004.0 1880.0,1993.3" fill="#00008c" stroke="#00008c" stroke-width="10" stroke-linejoin="round"/>
<path d="M1892.9 1994.0L1883.1 1996.0" stroke="#c0f0ff" stroke-width="3"/>
<polygon points="1877.6,1975.2 1811.9,1981.8 1811.2,1970.9 1877.2,1968.8" fill="#ff0000" stroke="#ff0000" stroke-width="10" stroke-linejoin="round"/>
<path d="M1889.9 1971.2L1879.9 1971.9" stroke="#c0f0ff" stroke-width="3"/>
<polygon points="1877.2,1950.6 1811.2,1948.5 1811.9,1937.6 1877.6,1944.2" fill="#ff0000" stroke="#ff0000" stroke-width="10" stroke-linejoin="round"/>
<path d="M1889.9 1948.2L1879.9 1947.5" stroke="#c0f0ff" stroke-width="3"/>
<polygon points="1880.0,1926.1 1814.8,1915.4 1817.0,1904.7 1881.2,1919.8" fill="#008c00" stroke="#008c00" stroke-width="10" stroke-linejoin="round"/>
<path d="M1892.9 1925.4L1883.1 1923.4" stroke="#c0f0ff" stroke-width="3"/>
<polygon points="1886.0,1902.1 1822.7,1883.1 1826.3,1872.7 1888.0,1896.1" fill="#008c00" stroke="#008c00" stroke-width="10" stroke-linejoin="round"/>
<path d="M1898.8 1903.1L1889.4 1899.9" stroke="#c0f0ff" stroke-width="3"/>
<polygon points="1895.0,1879.2 1834.8,1852.1 1839.7,1842.2 1897.9,1873.5" fill="#0000ff" stroke="#0000ff" stroke-width="10" stroke-linejoin="round"/>
<path d="M1907.7 1881.9L1898.7 1877.4" stroke="#c0f0ff" stroke-width="3"/>
<polygon points="1907.0,1857.6 1850.8,1822.9 1856.9,1813.7 1910.5,1852.3" fill="#0000ff" stroke="#0000ff" stroke-width="10" stroke-linejoin="round"/>
<path d="M1919.2 1861.9L1910.8 1856.4" stroke="#c0f0ff" stroke-width="3"/>
<polygon points="1921.7,1837.8 1870.5,1796.0 1877.8,1787.8 1925.9,1833.0" fill="#8c0000" stroke="#8c0000" stroke-width="10" stroke-linejoin="round"/>
<path d="M1933.2 1843.7L1925.7 1837.1" stroke="#c0f0ff" stroke-width="3"/>
<polygon points="1938.8,1820.1 1893.6,1772.0 1901.8,1764.7 1943.6,1815.9" fill="#8c0000" stroke="#8c0000" stroke-width="10" stroke-linejoin="round"/>
<path d="M1949.5 1827.4L1942.9 1819.9" stroke="#c0f0ff" stroke-width="3"/>
<polygon points="1958.1,1804.7 1919.5,1751.1 1928.7,1745.0 1963.4,1801.2" fill="#00ff00" stroke="#00ff00" stroke-width="10" stroke-linejoin="round"/>
<path d="M1967.7 1813.4L1962.2 1805.0" stroke="#c0f0ff" stroke-width="3"/>
<polygon points="1979.3,1792.1 1948.0,1733.9 1957.9,1729.0 1985.0,1789.2" fill="#00ff00" stroke="#00ff00" stroke-width="10" stroke-linejoin="round"/>
<path d="M1987.7 1801.9L1983.2 1792.9" stroke="#c0f0ff" stroke-width="3"/>
<polygon points="2001.9,1782.2 1978.5,1720.5 1988.9,1716.9 2007.9,1780.2" fill="#00008c" stroke="#00008c" stroke-width="10" stroke-linejoin="round"/>
<path d="M2008.9 1793.0L2005.7 1783.6" stroke="#c0f0ff" stroke-width="3"/>
<polygon points="2025.6,1775.4 2010.5,1711.2 2021.2,1709.0 2031.9,1774.2" fill="#00008c" stroke="#00008c" stroke-width="10" stroke-linejoin="round"/>
<path d="M2031.2 1787.1L2029.2 1777.3" stroke="#c0f0ff" stroke-width="3"/>
<circle cx="2065.5" cy="1959.7" r="174" fill="#666" stroke="#c0f0ff" stroke-width="6"/>
<polygon points="2186.2,1844.7 2195.7,1855.5 2196.8,1861.7 2184.2,1863.8 2177.6,1853.4" fill="#c0f0ff"/>
<polygon points="2191.3,1904.8 2202.6,1902.7 2193.6,1909.1 2191.8,1906.9" fill="#c0f0ff"/>
<polygon points="2217.2,1943.4 2227.5,1936.3 2231.4,1941.4 2232.2,1955.5 2219.9,1955.5" fill="#c0f0ff"/>
<polygon points="2184.2,1863.8 2196.8,1861.7 2203.6,1902.4 2191.3,1904.6" fill="#ff6600"/>
<polygon points="2193.6,1909.1 2203.6,1902.3 2227.5,1936.3 2217.2,1943.4" fill="#ff6600"/>
<path d="M2191.0 1865.3L2223.2 1859.8M2218.5 1863.5L2223.2 1859.8M2217.6 1857.9L2223.2 1859.8M2191.6 1869.3L2223.9 1863.8M2219.2 1867.5L2223.9 1863.8M2218.2 1861.9L2223.9 1863.8M2192.3 1873.3L2224.6 1867.8M2219.9 1871.5L2224.6 1867.8M2218.9 1865.9L2224.6 1867.8M2193.0 1877.3L2225.3 1871.8M2220.5 1875.5L2225.3 1871.8M2219.6 1869.9L2225.3 1871.8M2193.7 1881.3L2226.0 1875.9M2221.2 1879.5L2226.0 1875.9M2220.3 1874.0L2226.0 1875.9M2194.4 1885.4L2226.7 1879.9M2221.9 1883.5L2226.7 1879.9M2221.0 1878.0L2226.7 1879.9M2195.0 1889.4L2227.3 1883.9M2222.6 1887.6L2227.3 1883.9M2221.7 1882.0L2227.3 1883.9M2195.7 1893.4L2228.0 1887.9M2223.3 1891.6L2228.0 1887.9M2222.3 1886.0L2228.0 1887.9M2196.4 1897.4L2228.7 1891.9M2224.0 1895.6L2228.7 1891.9M2223.0 1890.0L2228.7 1891.9M2197.1 1901.4L2229.4 1895.9M2224.6 1899.6L2229.4 1895.9M2223.7 1894.0L2229.4 1895.9M2200.1 1907.9L2227.0 1889.2M2224.2 1894.5L2227.0 1889.2M2221.0 1889.9L2227.0 1889.2M2202.4 1911.2L2229.3 1892.5M2226.6 1897.8L2229.3 1892.5M2223.3 1893.2L2229.3 1892.5M2204.8 1914.6L2231.6 1895.9M2228.9 1901.2L2231.6 1895.9M2225.7 1896.6L2231.6 1895.9M2207.1 1918.0L2234.0 1899.2M2231.2 1904.6L2234.0 1899.2M2228.0 1899.9L2234.0 1899.2M2209.4 1921.3L2236.3 1902.6M2233.6 1907.9L2236.3 1902.6M2230.4 1903.3L2236.3 1902.6M2211.8 1924.7L2238.7 1905.9M2235.9 1911.3L2238.7 1905.9M2232.7 1906.7L2238.7 1905.9M2214.1 1928.0L2241.0 1909.3M2238.3 1914.6L2241.0 1909.3M2235.0 1910.0L2241.0 1909.3M2216.5 1931.4L2243.3 1912.7M2240.6 1918.0L2243.3 1912.7M2237.4 1913.4L2243.3 1912.7M2218.8 1934.7L2245.7 1916.0M2242.9 1921.4L2245.7 1916.0M2239.7 1916.7L2245.7 1916.0M2221.1 1938.1L2248.0 1919.4M2245.3 1924.7L2248.0 1919.4M2242.1 1920.1L2248.0 1919.4" fill="none" stroke="#101010" stroke-width="2.4" stroke-linecap="round"/>
<polygon points="2069.5,1793.1 2083.9,1793.9 2089.0,1797.5 2081.6,1807.9 2069.6,1805.3" fill="#c0f0ff"/>
<polygon points="2115.6,1831.9 2122.1,1822.4 2120.3,1833.4 2117.4,1833.1" fill="#c0f0ff"/>
<polygon points="2161.2,1840.9 2163.5,1828.6 2169.9,1829.5 2180.4,1838.9 2171.7,1847.6" fill="#c0f0ff"/>
<polygon points="2081.6,1807.9 2089.0,1797.5 2122.6,1821.5 2115.5,1831.8" fill="#ffbb33"/>
<polygon points="2120.3,1833.4 2122.6,1821.5 2163.5,1828.6 2161.2,1840.9" fill="#ffbb33"/>
<path d="M2087.4 1804.2L2068.5 1831.0M2069.3 1825.0L2068.5 1831.0M2073.9 1828.3L2068.5 1831.0M2090.8 1806.6L2071.8 1833.3M2072.6 1827.4L2071.8 1833.3M2077.2 1830.6L2071.8 1833.3M2094.1 1808.9L2075.1 1835.7M2075.9 1829.7L2075.1 1835.7M2080.5 1833.0L2075.1 1835.7M2097.4 1811.3L2078.5 1838.0M2079.2 1832.1L2078.5 1838.0M2083.8 1835.3L2078.5 1838.0M2100.7 1813.7L2081.8 1840.4M2082.6 1834.4L2081.8 1840.4M2087.1 1837.7L2081.8 1840.4M2104.1 1816.0L2085.1 1842.7M2085.9 1836.8L2085.1 1842.7M2090.5 1840.0L2085.1 1842.7M2107.4 1818.4L2088.4 1845.1M2089.2 1839.1L2088.4 1845.1M2093.8 1842.4L2088.4 1845.1M2110.7 1820.7L2091.8 1847.5M2092.5 1841.5L2091.8 1847.5M2097.1 1844.8L2091.8 1847.5M2114.0 1823.1L2095.1 1849.8M2095.8 1843.9L2095.1 1849.8M2100.4 1847.1L2095.1 1849.8M2117.3 1825.4L2098.4 1852.2M2099.2 1846.2L2098.4 1852.2M2103.8 1849.5L2098.4 1852.2M2124.0 1827.9L2118.3 1860.1M2116.4 1854.4L2118.3 1860.1M2122.0 1855.4L2118.3 1860.1M2128.0 1828.6L2122.3 1860.9M2120.4 1855.2L2122.3 1860.9M2126.0 1856.1L2122.3 1860.9M2132.1 1829.3L2126.3 1861.6M2124.5 1855.9L2126.3 1861.6M2130.0 1856.9L2126.3 1861.6M2136.1 1830.1L2130.3 1862.3M2128.5 1856.6L2130.3 1862.3M2134.0 1857.6L2130.3 1862.3M2140.1 1830.8L2134.4 1863.0M2132.5 1857.3L2134.4 1863.0M2138.1 1858.3L2134.4 1863.0M2144.2 1831.5L2138.4 1863.7M2136.6 1858.0L2138.4 1863.7M2142.1 1859.0L2138.4 1863.7M2148.2 1832.2L2142.4 1864.5M2140.6 1858.8L2142.4 1864.5M2146.1 1859.7L2142.4 1864.5M2152.2 1832.9L2146.5 1865.2M2144.6 1859.5L2146.5 1865.2M2150.2 1860.5L2146.5 1865.2M2156.3 1833.7L2150.5 1865.9M2148.7 1860.2L2150.5 1865.9M2154.2 1861.2L2150.5 1865.9M2160.3 1834.4L2154.5 1866.6M2152.7 1860.9L2154.5 1866.6M2158.2 1861.9L2154.5 1866.6" fill="none" stroke="#101010" stroke-width="2.4" stroke-linecap="round"/>
<polygon points="1950.5,1839.0 1961.3,1829.5 1967.5,1828.4 1969.6,1841.0 1959.2,1847.6" fill="#c0f0ff"/>
<polygon points="2010.6,1833.9 2008.5,1822.6 2014.9,1831.6 2012.7,1833.4" fill="#c0f0ff"/>
<polygon points="2049.2,1808.0 2042.1,1797.7 2047.2,1793.8 2061.3,1793.0 2061.3,1805.3" fill="#c0f0ff"/>
<polygon points="1969.6,1841.0 1967.5,1828.4 2008.2,1821.6 2010.4,1833.9" fill="#ff6600"/>
<polygon points="2014.9,1831.6 2008.1,1821.6 2042.1,1797.7 2049.2,1808.0" fill="#ff6600"/>
<path d="M1971.1 1834.2L1965.6 1802.0M1969.3 1806.7L1965.6 1802.0M1963.7 1807.6L1965.6 1802.0M1975.1 1833.6L1969.6 1801.3M1973.3 1806.0L1969.6 1801.3M1967.7 1807.0L1969.6 1801.3M1979.1 1832.9L1973.6 1800.6M1977.3 1805.3L1973.6 1800.6M1971.7 1806.3L1973.6 1800.6M1983.1 1832.2L1977.6 1799.9M1981.3 1804.7L1977.6 1799.9M1975.7 1805.6L1977.6 1799.9M1987.1 1831.5L1981.7 1799.2M1985.3 1804.0L1981.7 1799.2M1979.8 1804.9L1981.7 1799.2M1991.2 1830.8L1985.7 1798.5M1989.3 1803.3L1985.7 1798.5M1983.8 1804.2L1985.7 1798.5M1995.2 1830.2L1989.7 1797.9M1993.4 1802.6L1989.7 1797.9M1987.8 1803.5L1989.7 1797.9M1999.2 1829.5L1993.7 1797.2M1997.4 1801.9L1993.7 1797.2M1991.8 1802.9L1993.7 1797.2M2003.2 1828.8L1997.7 1796.5M2001.4 1801.2L1997.7 1796.5M1995.8 1802.2L1997.7 1796.5M2007.2 1828.1L2001.7 1795.8M2005.4 1800.6L2001.7 1795.8M1999.8 1801.5L2001.7 1795.8M2013.7 1825.1L1995.0 1798.2M2000.3 1801.0L1995.0 1798.2M1995.7 1804.2L1995.0 1798.2M2017.0 1822.8L1998.3 1795.9M2003.6 1798.6L1998.3 1795.9M1999.0 1801.9L1998.3 1795.9M2020.4 1820.4L2001.7 1793.6M2007.0 1796.3L2001.7 1793.6M2002.4 1799.5L2001.7 1793.6M2023.8 1818.1L2005.0 1791.2M2010.4 1794.0L2005.0 1791.2M2005.7 1797.2L2005.0 1791.2M2027.1 1815.8L2008.4 1788.9M2013.7 1791.6L2008.4 1788.9M2009.1 1794.8L2008.4 1788.9M2030.5 1813.4L2011.7 1786.5M2017.1 1789.3L2011.7 1786.5M2012.5 1792.5L2011.7 1786.5M2033.8 1811.1L2015.1 1784.2M2020.4 1786.9L2015.1 1784.2M2015.8 1790.2L2015.1 1784.2M2037.2 1808.7L2018.5 1781.9M2023.8 1784.6L2018.5 1781.9M2019.2 1787.8L2018.5 1781.9M2040.5 1806.4L2021.8 1779.5M2027.2 1782.3L2021.8 1779.5M2022.5 1785.5L2021.8 1779.5M2043.9 1804.1L2025.2 1777.2M2030.5 1779.9L2025.2 1777.2M2025.9 1783.1L2025.2 1777.2" fill="none" stroke="#101010" stroke-width="2.4" stroke-linecap="round"/>
<polygon points="1898.9,1955.7 1899.7,1941.3 1903.3,1936.2 1913.7,1943.6 1911.1,1955.6" fill="#c0f0ff"/>
<polygon points="1937.7,1909.6 1928.2,1903.1 1939.2,1904.9 1938.9,1907.8" fill="#c0f0ff"/>
<polygon points="1946.7,1864.0 1934.4,1861.7 1935.3,1855.3 1944.7,1844.8 1953.4,1853.5" fill="#c0f0ff"/>
<polygon points="1913.7,1943.6 1903.3,1936.2 1927.3,1902.6 1937.6,1909.7" fill="#ffbb33"/>
<polygon points="1939.2,1904.9 1927.3,1902.6 1934.4,1861.7 1946.7,1864.0" fill="#ffbb33"/>
<path d="M1910.0 1937.8L1936.8 1956.7M1930.8 1955.9L1936.8 1956.7M1934.1 1951.3L1936.8 1956.7M1912.4 1934.4L1939.1 1953.4M1933.2 1952.6L1939.1 1953.4M1936.4 1948.0L1939.1 1953.4M1914.7 1931.1L1941.5 1950.1M1935.5 1949.3L1941.5 1950.1M1938.8 1944.7L1941.5 1950.1M1917.1 1927.8L1943.8 1946.7M1937.9 1946.0L1943.8 1946.7M1941.1 1941.4L1943.8 1946.7M1919.5 1924.5L1946.2 1943.4M1940.2 1942.6L1946.2 1943.4M1943.5 1938.1L1946.2 1943.4M1921.8 1921.1L1948.5 1940.1M1942.6 1939.3L1948.5 1940.1M1945.8 1934.7L1948.5 1940.1M1924.2 1917.8L1950.9 1936.8M1944.9 1936.0L1950.9 1936.8M1948.2 1931.4L1950.9 1936.8M1926.5 1914.5L1953.3 1933.4M1947.3 1932.7L1953.3 1933.4M1950.6 1928.1L1953.3 1933.4M1928.9 1911.2L1955.6 1930.1M1949.7 1929.4L1955.6 1930.1M1952.9 1924.8L1955.6 1930.1M1931.2 1907.9L1958.0 1926.8M1952.0 1926.0L1958.0 1926.8M1955.3 1921.4L1958.0 1926.8M1933.7 1901.2L1965.9 1906.9M1960.2 1908.8L1965.9 1906.9M1961.2 1903.2L1965.9 1906.9M1934.4 1897.2L1966.7 1902.9M1961.0 1904.8L1966.7 1902.9M1961.9 1899.2L1966.7 1902.9M1935.1 1893.1L1967.4 1898.9M1961.7 1900.7L1967.4 1898.9M1962.7 1895.2L1967.4 1898.9M1935.9 1889.1L1968.1 1894.9M1962.4 1896.7L1968.1 1894.9M1963.4 1891.2L1968.1 1894.9M1936.6 1885.1L1968.8 1890.8M1963.1 1892.7L1968.8 1890.8M1964.1 1887.1L1968.8 1890.8M1937.3 1881.0L1969.5 1886.8M1963.8 1888.6L1969.5 1886.8M1964.8 1883.1L1969.5 1886.8M1938.0 1877.0L1970.3 1882.8M1964.6 1884.6L1970.3 1882.8M1965.5 1879.1L1970.3 1882.8M1938.7 1873.0L1971.0 1878.7M1965.3 1880.6L1971.0 1878.7M1966.3 1875.0L1971.0 1878.7M1939.5 1868.9L1971.7 1874.7M1966.0 1876.5L1971.7 1874.7M1967.0 1871.0L1971.7 1874.7M1940.2 1864.9L1972.4 1870.7M1966.7 1872.5L1972.4 1870.7M1967.7 1867.0L1972.4 1870.7" fill="none" stroke="#101010" stroke-width="2.4" stroke-linecap="round"/>
<polygon points="1944.8,2074.7 1935.3,2063.9 1934.2,2057.7 1946.8,2055.6 1953.4,2066.0" fill="#c0f0ff"/>
<polygon points="1939.7,2014.6 1928.4,2016.7 1937.4,2010.3 1939.2,2012.5" fill="#c0f0ff"/>
<polygon points="1913.8,1976.0 1903.5,1983.1 1899.6,1978.0 1898.8,1963.9 1911.1,1963.9" fill="#c0f0ff"/>
<polygon points="1946.8,2055.6 1934.2,2057.7 1927.4,2017.0 1939.7,2014.8" fill="#ff6600"/>
<polygon points="1937.4,2010.3 1927.4,2017.1 1903.5,1983.1 1913.8,1976.0" fill="#ff6600"/>
<path d="M1940.0 2054.1L1907.8 2059.6M1912.5 2055.9L1907.8 2059.6M1913.4 2061.5L1907.8 2059.6M1939.4 2050.1L1907.1 2055.6M1911.8 2051.9L1907.1 2055.6M1912.8 2057.5L1907.1 2055.6M1938.7 2046.1L1906.4 2051.6M1911.1 2047.9L1906.4 2051.6M1912.1 2053.5L1906.4 2051.6M1938.0 2042.1L1905.7 2047.6M1910.5 2043.9L1905.7 2047.6M1911.4 2049.5L1905.7 2047.6M1937.3 2038.1L1905.0 2043.5M1909.8 2039.9L1905.0 2043.5M1910.7 2045.4L1905.0 2043.5M1936.6 2034.0L1904.3 2039.5M1909.1 2035.9L1904.3 2039.5M1910.0 2041.4L1904.3 2039.5M1936.0 2030.0L1903.7 2035.5M1908.4 2031.8L1903.7 2035.5M1909.3 2037.4L1903.7 2035.5M1935.3 2026.0L1903.0 2031.5M1907.7 2027.8L1903.0 2031.5M1908.7 2033.4L1903.0 2031.5M1934.6 2022.0L1902.3 2027.5M1907.0 2023.8L1902.3 2027.5M1908.0 2029.4L1902.3 2027.5M1933.9 2018.0L1901.6 2023.5M1906.4 2019.8L1901.6 2023.5M1907.3 2025.4L1901.6 2023.5M1930.9 2011.5L1904.0 2030.2M1906.8 2024.9L1904.0 2030.2M1910.0 2029.5L1904.0 2030.2M1928.6 2008.2L1901.7 2026.9M1904.4 2021.6L1901.7 2026.9M1907.7 2026.2L1901.7 2026.9M1926.2 2004.8L1899.4 2023.5M1902.1 2018.2L1899.4 2023.5M1905.3 2022.8L1899.4 2023.5M1923.9 2001.4L1897.0 2020.2M1899.8 2014.8L1897.0 2020.2M1903.0 2019.5L1897.0 2020.2M1921.6 1998.1L1894.7 2016.8M1897.4 2011.5L1894.7 2016.8M1900.6 2016.1L1894.7 2016.8M1919.2 1994.7L1892.3 2013.5M1895.1 2008.1L1892.3 2013.5M1898.3 2012.7L1892.3 2013.5M1916.9 1991.4L1890.0 2010.1M1892.7 2004.8L1890.0 2010.1M1896.0 2009.4L1890.0 2010.1M1914.5 1988.0L1887.7 2006.7M1890.4 2001.4L1887.7 2006.7M1893.6 2006.0L1887.7 2006.7M1912.2 1984.7L1885.3 2003.4M1888.1 1998.0L1885.3 2003.4M1891.3 2002.7L1885.3 2003.4M1909.9 1981.3L1883.0 2000.0M1885.7 1994.7L1883.0 2000.0M1888.9 1999.3L1883.0 2000.0" fill="none" stroke="#101010" stroke-width="2.4" stroke-linecap="round"/>
<polygon points="2061.5,2126.3 2047.1,2125.5 2042.0,2121.9 2049.4,2111.5 2061.4,2114.1" fill="#c0f0ff"/>
<polygon points="2015.4,2087.5 2008.9,2097.0 2010.7,2086.0 2013.6,2086.3" fill="#c0f0ff"/>
<polygon points="1969.8,2078.5 1967.5,2090.8 1961.1,2089.9 1950.6,2080.5 1959.3,2071.8" fill="#c0f0ff"/>
<polygon points="2049.4,2111.5 2042.0,2121.9 2008.4,2097.9 2015.5,2087.6" fill="#ffbb33"/>
<polygon points="2010.7,2086.0 2008.4,2097.9 1967.5,2090.8 1969.8,2078.5" fill="#ffbb33"/>
<path d="M2043.6 2115.2L2062.5 2088.4M2061.7 2094.4L2062.5 2088.4M2057.1 2091.1L2062.5 2088.4M2040.2 2112.8L2059.2 2086.1M2058.4 2092.0L2059.2 2086.1M2053.8 2088.8L2059.2 2086.1M2036.9 2110.5L2055.9 2083.7M2055.1 2089.7L2055.9 2083.7M2050.5 2086.4L2055.9 2083.7M2033.6 2108.1L2052.5 2081.4M2051.8 2087.3L2052.5 2081.4M2047.2 2084.1L2052.5 2081.4M2030.3 2105.7L2049.2 2079.0M2048.4 2085.0L2049.2 2079.0M2043.9 2081.7L2049.2 2079.0M2026.9 2103.4L2045.9 2076.7M2045.1 2082.6L2045.9 2076.7M2040.5 2079.4L2045.9 2076.7M2023.6 2101.0L2042.6 2074.3M2041.8 2080.3L2042.6 2074.3M2037.2 2077.0L2042.6 2074.3M2020.3 2098.7L2039.2 2071.9M2038.5 2077.9L2039.2 2071.9M2033.9 2074.6L2039.2 2071.9M2017.0 2096.3L2035.9 2069.6M2035.2 2075.5L2035.9 2069.6M2030.6 2072.3L2035.9 2069.6M2013.7 2094.0L2032.6 2067.2M2031.8 2073.2L2032.6 2067.2M2027.2 2069.9L2032.6 2067.2M2007.0 2091.5L2012.7 2059.3M2014.6 2065.0L2012.7 2059.3M2009.0 2064.0L2012.7 2059.3M2003.0 2090.8L2008.7 2058.5M2010.6 2064.2L2008.7 2058.5M2005.0 2063.3L2008.7 2058.5M1998.9 2090.1L2004.7 2057.8M2006.5 2063.5L2004.7 2057.8M2001.0 2062.5L2004.7 2057.8M1994.9 2089.3L2000.7 2057.1M2002.5 2062.8L2000.7 2057.1M1997.0 2061.8L2000.7 2057.1M1990.9 2088.6L1996.6 2056.4M1998.5 2062.1L1996.6 2056.4M1992.9 2061.1L1996.6 2056.4M1986.8 2087.9L1992.6 2055.7M1994.4 2061.4L1992.6 2055.7M1988.9 2060.4L1992.6 2055.7M1982.8 2087.2L1988.6 2054.9M1990.4 2060.6L1988.6 2054.9M1984.9 2059.7L1988.6 2054.9M1978.8 2086.5L1984.5 2054.2M1986.4 2059.9L1984.5 2054.2M1980.8 2058.9L1984.5 2054.2M1974.7 2085.7L1980.5 2053.5M1982.3 2059.2L1980.5 2053.5M1976.8 2058.2L1980.5 2053.5M1970.7 2085.0L1976.5 2052.8M1978.3 2058.5L1976.5 2052.8M1972.8 2057.5L1976.5 2052.8" fill="none" stroke="#101010" stroke-width="2.4" stroke-linecap="round"/>
<polygon points="2180.5,2080.4 2169.7,2089.9 2163.5,2091.0 2161.4,2078.4 2171.8,2071.8" fill="#c0f0ff"/>
<polygon points="2120.4,2085.5 2122.5,2096.8 2116.1,2087.8 2118.3,2086.0" fill="#c0f0ff"/>
<polygon points="2081.8,2111.4 2088.9,2121.7 2083.8,2125.6 2069.7,2126.4 2069.7,2114.1" fill="#c0f0ff"/>
<polygon points="2161.4,2078.4 2163.5,2091.0 2122.8,2097.8 2120.6,2085.5" fill="#ff6600"/>
<polygon points="2116.1,2087.8 2122.9,2097.8 2088.9,2121.7 2081.8,2111.4" fill="#ff6600"/>
<path d="M2159.9 2085.2L2165.4 2117.4M2161.7 2112.7L2165.4 2117.4M2167.3 2111.8L2165.4 2117.4M2155.9 2085.8L2161.4 2118.1M2157.7 2113.4L2161.4 2118.1M2163.3 2112.4L2161.4 2118.1M2151.9 2086.5L2157.4 2118.8M2153.7 2114.1L2157.4 2118.8M2159.3 2113.1L2157.4 2118.8M2147.9 2087.2L2153.4 2119.5M2149.7 2114.7L2153.4 2119.5M2155.3 2113.8L2153.4 2119.5M2143.9 2087.9L2149.3 2120.2M2145.7 2115.4L2149.3 2120.2M2151.2 2114.5L2149.3 2120.2M2139.8 2088.6L2145.3 2120.9M2141.7 2116.1L2145.3 2120.9M2147.2 2115.2L2145.3 2120.9M2135.8 2089.2L2141.3 2121.5M2137.6 2116.8L2141.3 2121.5M2143.2 2115.9L2141.3 2121.5M2131.8 2089.9L2137.3 2122.2M2133.6 2117.5L2137.3 2122.2M2139.2 2116.5L2137.3 2122.2M2127.8 2090.6L2133.3 2122.9M2129.6 2118.2L2133.3 2122.9M2135.2 2117.2L2133.3 2122.9M2123.8 2091.3L2129.3 2123.6M2125.6 2118.8L2129.3 2123.6M2131.2 2117.9L2129.3 2123.6M2117.3 2094.3L2136.0 2121.2M2130.7 2118.4L2136.0 2121.2M2135.3 2115.2L2136.0 2121.2M2114.0 2096.6L2132.7 2123.5M2127.4 2120.8L2132.7 2123.5M2132.0 2117.5L2132.7 2123.5M2110.6 2099.0L2129.3 2125.8M2124.0 2123.1L2129.3 2125.8M2128.6 2119.9L2129.3 2125.8M2107.2 2101.3L2126.0 2128.2M2120.6 2125.4L2126.0 2128.2M2125.3 2122.2L2126.0 2128.2M2103.9 2103.6L2122.6 2130.5M2117.3 2127.8L2122.6 2130.5M2121.9 2124.6L2122.6 2130.5M2100.5 2106.0L2119.3 2132.9M2113.9 2130.1L2119.3 2132.9M2118.5 2126.9L2119.3 2132.9M2097.2 2108.3L2115.9 2135.2M2110.6 2132.5L2115.9 2135.2M2115.2 2129.2L2115.9 2135.2M2093.8 2110.7L2112.5 2137.5M2107.2 2134.8L2112.5 2137.5M2111.8 2131.6L2112.5 2137.5M2090.5 2113.0L2109.2 2139.9M2103.8 2137.1L2109.2 2139.9M2108.5 2133.9L2109.2 2139.9M2087.1 2115.3L2105.8 2142.2M2100.5 2139.5L2105.8 2142.2M2105.1 2136.3L2105.8 2142.2" fill="none" stroke="#101010" stroke-width="2.4" stroke-linecap="round"/>
<polygon points="2232.1,1963.7 2231.3,1978.1 2227.7,1983.2 2217.3,1975.8 2219.9,1963.8" fill="#c0f0ff"/>
<polygon points="2193.3,2009.8 2202.8,2016.3 2191.8,2014.5 2192.1,2011.6" fill="#c0f0ff"/>
<polygon points="2184.3,2055.4 2196.6,2057.7 2195.7,2064.1 2186.3,2074.6 2177.6,2065.9" fill="#c0f0ff"/>
<polygon points="2217.3,1975.8 2227.7,1983.2 2203.7,2016.8 2193.4,2009.7" fill="#ffbb33"/>
<polygon points="2191.8,2014.5 2203.7,2016.8 2196.6,2057.7 2184.3,2055.4" fill="#ffbb33"/>
<path d="M2221.0 1981.6L2194.2 1962.7M2200.2 1963.5L2194.2 1962.7M2196.9 1968.1L2194.2 1962.7M2218.6 1985.0L2191.9 1966.0M2197.8 1966.8L2191.9 1966.0M2194.6 1971.4L2191.9 1966.0M2216.3 1988.3L2189.5 1969.3M2195.5 1970.1L2189.5 1969.3M2192.2 1974.7L2189.5 1969.3M2213.9 1991.6L2187.2 1972.7M2193.1 1973.4L2187.2 1972.7M2189.9 1978.0L2187.2 1972.7M2211.5 1994.9L2184.8 1976.0M2190.8 1976.8L2184.8 1976.0M2187.5 1981.3L2184.8 1976.0M2209.2 1998.3L2182.5 1979.3M2188.4 1980.1L2182.5 1979.3M2185.2 1984.7L2182.5 1979.3M2206.8 2001.6L2180.1 1982.6M2186.1 1983.4L2180.1 1982.6M2182.8 1988.0L2180.1 1982.6M2204.5 2004.9L2177.7 1986.0M2183.7 1986.7L2177.7 1986.0M2180.4 1991.3L2177.7 1986.0M2202.1 2008.2L2175.4 1989.3M2181.3 1990.0L2175.4 1989.3M2178.1 1994.6L2175.4 1989.3M2199.8 2011.5L2173.0 1992.6M2179.0 1993.4L2173.0 1992.6M2175.7 1998.0L2173.0 1992.6M2197.3 2018.2L2165.1 2012.5M2170.8 2010.6L2165.1 2012.5M2169.8 2016.2L2165.1 2012.5M2196.6 2022.2L2164.3 2016.5M2170.0 2014.6L2164.3 2016.5M2169.1 2020.2L2164.3 2016.5M2195.9 2026.3L2163.6 2020.5M2169.3 2018.7L2163.6 2020.5M2168.3 2024.2L2163.6 2020.5M2195.1 2030.3L2162.9 2024.5M2168.6 2022.7L2162.9 2024.5M2167.6 2028.2L2162.9 2024.5M2194.4 2034.3L2162.2 2028.6M2167.9 2026.7L2162.2 2028.6M2166.9 2032.3L2162.2 2028.6M2193.7 2038.4L2161.5 2032.6M2167.2 2030.8L2161.5 2032.6M2166.2 2036.3L2161.5 2032.6M2193.0 2042.4L2160.7 2036.6M2166.4 2034.8L2160.7 2036.6M2165.5 2040.3L2160.7 2036.6M2192.3 2046.4L2160.0 2040.7M2165.7 2038.8L2160.0 2040.7M2164.7 2044.4L2160.0 2040.7M2191.5 2050.5L2159.3 2044.7M2165.0 2042.9L2159.3 2044.7M2164.0 2048.4L2159.3 2044.7M2190.8 2054.5L2158.6 2048.7M2164.3 2046.9L2158.6 2048.7M2163.3 2052.4L2158.6 2048.7" fill="none" stroke="#101010" stroke-width="2.4" stroke-linecap="round"/>
<circle cx="2065.5" cy="1959.7" r="91.5" fill="#a9a9a9"/>
</svg>
<svg class="icons icons-workspace" width="4132" height="2475" viewBox="0 0 4132 2475">
<rect x="2889.3" y="551.7" width="45.1" height="47.9" fill="#2b2b2b"/>
<rect x="2939.5" y="553" width="12.5" height="45.3" fill="none" stroke="#444" stroke-width="2.6"/>
<rect x="2981" y="551.7" width="64" height="47.9" fill="#2b2b2b"/>
<rect x="3073.4" y="553" width="13" height="45.3" fill="none" stroke="#444" stroke-width="2.6"/>
<rect x="3091" y="551.7" width="45.2" height="47.9" fill="#2b2b2b"/>
</svg>
<div class="t" style="left:1007.4px;top:549.2px;font-size:46.5px;line-height:56px;color:#111;transform:scaleX(0.9614);-webkit-text-stroke:1.20px #111;">ROTOR - POLARIZATION</div>
<div class="t" style="left:1004.1px;top:653.4px;font-size:46.5px;line-height:56px;color:#fff;transform:scaleX(1.0197);-webkit-text-stroke:1.20px #fff;">View</div>
<div class="t" style="left:1326.4px;top:653.4px;font-size:46.5px;line-height:56px;color:#111;transform:scaleX(1.1123);-webkit-text-stroke:1.20px #111;">Datasheet</div>
</main>
<aside id="properties">
<div class="b phdr" style="left:3166px;top:530px;width:942px;height:91px;background:#c0c0c0;"></div>
<div class="b pbody" style="left:3166px;top:621px;width:942px;height:1743px;background:#dedede;"></div>
<div class="b tbl" style="left:3180px;top:635.5px;width:914px;height:305.5px;background:#808080;"></div>
<div class="b th" style="left:3185px;top:640.5px;width:904px;height:64.5px;background:#c0c0c0;"></div>
<div class="b tr" style="left:3185px;top:710.5px;width:904px;height:53.3px;background:#fff;"></div>
<div class="b tr" style="left:3185px;top:763.8px;width:904px;height:58.9px;background:#e8e8e8;"></div>
<div class="b tr" style="left:3185px;top:822.7px;width:904px;height:59.3px;background:#fff;"></div>
<div class="b tr" style="left:3185px;top:882px;width:904px;height:54px;background:#e8e8e8;"></div>
<div class="b coldiv" style="left:3635px;top:710.5px;width:2.5px;height:225.5px;background:#808080;"></div>
<div class="b btn" style="left:3462.6px;top:982px;width:146.9px;height:91px;background:#fff;box-sizing:border-box;border:4.5px solid #808080;"></div>
<div class="b btn" style="left:3664.4px;top:982px;width:146.9px;height:91px;background:#fff;box-sizing:border-box;border:4.5px solid #808080;"></div>
<div class="b btn" style="left:3575.5px;top:1200.4px;width:147.2px;height:90.1px;background:#fff;box-sizing:border-box;border:4.5px solid #808080;"></div>
<div class="b hr" style="left:3180px;top:1153.5px;width:914px;height:3px;background:#808080;"></div>
<div class="b hl" style="left:3628px;top:876px;width:125px;height:68px;background:transparent;box-sizing:border-box;border:9px solid #f80000;"></div>
<div class="b hl" style="left:3452px;top:971px;width:178px;height:118px;background:transparent;box-sizing:border-box;border:9px solid #f80000;"></div>
<svg class="icons icons-properties" width="4132" height="2475" viewBox="0 0 4132 2475">
<rect x="3191" y="725.5" width="22" height="22" fill="#fff" stroke="#888" stroke-width="2"/>
<path d="M3196 736.5H3208" stroke="#333" stroke-width="2.6"/>
<path d="M3504.6 1022.1L3529.3 1049.6L3564.3 1005.7" fill="none" stroke="#2b2b2b" stroke-width="6.5" stroke-linecap="round" stroke-linejoin="miter"/>
<path d="M3712.8 1031.4A24.2 24.2 0 1 0 3740.0 1009.2" fill="none" stroke="#2b2b2b" stroke-width="6" stroke-linecap="round"/>
<polygon points="3725.5,1008.4 3742.2,998.4 3742.2,1017.6" fill="#2b2b2b"/>
<rect x="3620.6" y="1215.7" width="40.1" height="59.8" rx="5" fill="none" stroke="#333" stroke-width="4"/>
<path d="M3627.8 1240.4H3652.7M3627.8 1248.9H3652.7M3627.8 1257.1H3652.7M3627.8 1264.1H3652.7" stroke="#aaa" stroke-width="3.7"/>
<path d="M3648.2 1247.4H3665.5V1241.5L3676.6 1252.7L3665.5 1263.8V1258.2H3648.2Z" fill="#2b2b2b"/>
</svg>
<div class="t" style="left:3190.9px;top:549.2px;font-size:46.5px;line-height:56px;color:#111;transform:scaleX(0.9712);-webkit-text-stroke:1.20px #111;">POLARIZATION</div>
<div class="t" style="left:4055.7px;top:543.0px;font-size:59.6px;line-height:72px;color:#333;-webkit-text-stroke:0.35px #333;">?</div>
<div class="t" style="left:3484.8px;top:645.4px;font-size:45.1px;line-height:54px;color:#111;transform:scaleX(0.9028);-webkit-text-stroke:0.35px #111;">POLARIZATION</div>
<div class="t" style="left:3214.8px;top:713.2px;font-size:37.8px;line-height:45px;color:#262626;transform:scaleX(1.1028);-webkit-text-stroke:0.35px #262626;">Magnet</div>
<div class="t" style="left:3251.7px;top:771.0px;font-size:37.8px;line-height:45px;color:#262626;transform:scaleX(1.0538);-webkit-text-stroke:0.35px #262626;">Coord. system</div>
<div class="t" style="left:3641.5px;top:771.0px;font-size:37.8px;line-height:45px;color:#262626;transform:scaleX(1.0401);-webkit-text-stroke:0.35px #262626;">Local</div>
<div class="t" style="left:3251.7px;top:830.3px;font-size:37.8px;line-height:45px;color:#262626;transform:scaleX(1.1298);-webkit-text-stroke:0.35px #262626;">Orientation</div>
<div class="t" style="left:3641.2px;top:830.3px;font-size:37.8px;line-height:45px;color:#262626;transform:scaleX(1.1220);-webkit-text-stroke:0.35px #262626;">Direction</div>
<div class="t" style="left:3253.6px;top:889.2px;font-size:37.8px;line-height:45px;color:#262626;transform:scaleX(1.0370);-webkit-text-stroke:0.35px #262626;">Angle (deg)</div>
<div class="t" style="left:3642.9px;top:889.2px;font-size:37.8px;line-height:45px;color:#262626;transform:scaleX(1.0259);-webkit-text-stroke:0.35px #262626;">90.0</div>
</aside>
</body></html>
